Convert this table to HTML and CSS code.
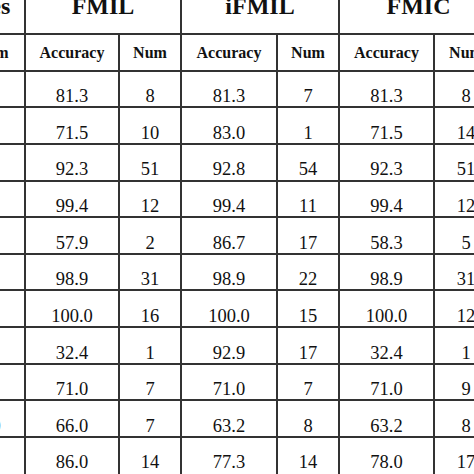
FILE: index.html
```html
<!DOCTYPE html>
<html>
<head>
<meta charset="utf-8">
<link rel="stylesheet" href="styles.css">
</head>
<body>
<div class="table">
  <div class="cell head name">Classes</div>
  <div class="cell head span2">FMIL</div>
  <div class="cell head span2">iFMIL</div>
  <div class="cell head span2">FMIC</div>

  <div class="cell sub">Program</div>
  <div class="cell sub">Accuracy</div>
  <div class="cell sub">Num</div>
  <div class="cell sub">Accuracy</div>
  <div class="cell sub">Num</div>
  <div class="cell sub">Accuracy</div>
  <div class="cell sub">Num</div>

  <div class="cell name">Prog 1</div><div class="cell">81.3</div><div class="cell">8</div><div class="cell">81.3</div><div class="cell">7</div><div class="cell">81.3</div><div class="cell">8</div>
  <div class="cell name">Prog 2</div><div class="cell">71.5</div><div class="cell">10</div><div class="cell">83.0</div><div class="cell">1</div><div class="cell">71.5</div><div class="cell">14</div>
  <div class="cell name">Prog 3</div><div class="cell">92.3</div><div class="cell">51</div><div class="cell">92.8</div><div class="cell">54</div><div class="cell">92.3</div><div class="cell">51</div>
  <div class="cell name">Prog 4</div><div class="cell">99.4</div><div class="cell">12</div><div class="cell">99.4</div><div class="cell">11</div><div class="cell">99.4</div><div class="cell">12</div>
  <div class="cell name">Prog 5</div><div class="cell">57.9</div><div class="cell">2</div><div class="cell">86.7</div><div class="cell">17</div><div class="cell">58.3</div><div class="cell">5</div>
  <div class="cell name">Prog 6</div><div class="cell">98.9</div><div class="cell">31</div><div class="cell">98.9</div><div class="cell">22</div><div class="cell">98.9</div><div class="cell">31</div>
  <div class="cell name">Prog 7</div><div class="cell">100.0</div><div class="cell">16</div><div class="cell">100.0</div><div class="cell">15</div><div class="cell">100.0</div><div class="cell">12</div>
  <div class="cell name">Prog 8</div><div class="cell">32.4</div><div class="cell">1</div><div class="cell">92.9</div><div class="cell">17</div><div class="cell">32.4</div><div class="cell">1</div>
  <div class="cell name">Prog 9</div><div class="cell">71.0</div><div class="cell">7</div><div class="cell">71.0</div><div class="cell">7</div><div class="cell">71.0</div><div class="cell">9</div>
  <div class="cell name">Prog10</div><div class="cell">66.0</div><div class="cell">7</div><div class="cell">63.2</div><div class="cell">8</div><div class="cell">63.2</div><div class="cell">8</div>
  <div class="cell name">Prog11</div><div class="cell">86.0</div><div class="cell">14</div><div class="cell">77.3</div><div class="cell">14</div><div class="cell">78.0</div><div class="cell">17</div>
</div>
</body>
</html>
```
FILE: styles.css
```css
html, body {
  margin: 0;
  padding: 0;
  background: #ffffff;
  overflow: hidden;
}

body {
  width: 474px;
  height: 474px;
  font-family: "Liberation Serif", "Times New Roman", serif;
  color: #111111;
}

.table {
  display: grid;
  width: max-content;
  grid-template-columns: 92px 92px 60px 94px 60px 93px 62px;
  grid-template-rows: 40px repeat(11, 34.64px) 40px;
  gap: 2px;
  background: #333333;
  margin-left: -68px;
  margin-top: -7px;
}

.cell {
  background: #ffffff;
  text-align: center;
  white-space: nowrap;
  overflow: hidden;
  font-size: 18.5px;
  line-height: 18.5px;
  padding-top: 15.5px;
  box-sizing: border-box;
}

.name {
  padding-right: 8px;
}

.head {
  font-weight: bold;
  font-size: 24px;
  line-height: 24px;
  padding-top: 1px;
}

.head.name {
  padding-right: 10px;
}

.span2 {
  grid-column: span 2;
}

.sub {
  font-weight: bold;
  font-size: 16px;
  line-height: 16px;
  padding-top: 10px;
}
```
